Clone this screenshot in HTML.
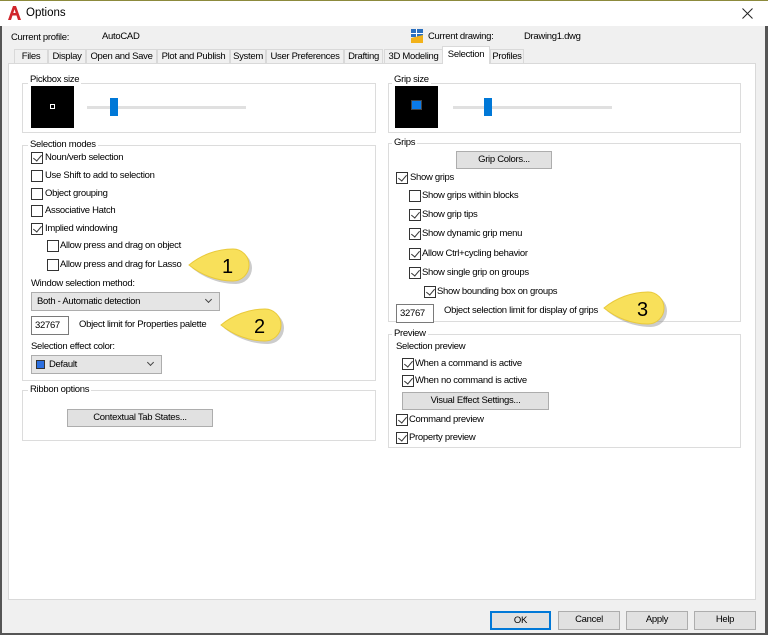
<!DOCTYPE html>
<html><head><meta charset="utf-8"><style>
*{box-sizing:border-box;margin:0;padding:0}
body{width:768px;height:635px;background:#f0f0f0;font-family:"Liberation Sans",sans-serif;font-size:9.5px;letter-spacing:-0.3px;color:#000;position:relative;overflow:hidden}
.a{position:absolute;white-space:nowrap}
.t{position:absolute;white-space:nowrap;line-height:12px}
.grp{position:absolute;border:1px solid #dcdcdc}
.gl{position:absolute;background:#fff;padding:0 2px;line-height:12px;white-space:nowrap}
.cb{position:absolute;width:12px;height:12px;border:1px solid #333;background:#fff}
.cb.c::after{content:"";position:absolute;left:3px;top:0px;width:4px;height:7px;border:solid #333;border-width:0 1.3px 1.3px 0;transform:rotate(40deg)}
.btn{position:absolute;background:#e1e1e1;border:1px solid #adadad;text-align:center;line-height:16px;white-space:nowrap}
.tab{position:absolute;top:49px;height:15px;border:1px solid #d9d9d9;border-bottom:none;background:#f0f0f0;line-height:14px;text-align:center;white-space:nowrap;overflow:hidden}
.inp{position:absolute;border:1px solid #7a7a7a;background:#fff;line-height:17px;padding-left:3px}
.dd{position:absolute;background:#e5e5e5;border:1px solid #adadad;line-height:17px;padding-left:5px;white-space:nowrap}
.dd::after{content:"";position:absolute;right:8px;top:4px;width:4px;height:4px;border:solid #444;border-width:0 1px 1px 0;transform:rotate(45deg)}
</style></head><body>
<div class="a" style="left:0;top:0;width:768px;height:26px;background:#fff;border-top:1px solid #8c8a3c"></div>
<div class="a" style="left:0;top:26px;width:2px;height:609px;background:#555"></div>
<div class="a" style="left:765px;top:26px;width:3px;height:609px;background:#555"></div>
<div class="a" style="left:0;top:633px;width:768px;height:2px;background:#555"></div>
<svg class="a" style="left:8px;top:6px" width="13" height="14" viewBox="0 0 13 14"><path d="M0 14 L5 0 H8 L13 14 H10 L8.5 9.5 H4.5 L3 14 Z M5.3 7 H7.7 L6.5 3.3 Z" fill="#d0262c"/></svg>
<div class="t" style="left:26px;top:7px;font-size:11.5px;letter-spacing:0">Options</div>
<svg class="a" style="left:742px;top:8px" width="11" height="11"><path d="M0.5 0.5 L10.5 10.5 M10.5 0.5 L0.5 10.5" stroke="#222" stroke-width="1"/></svg>

<div class="t" style="left:11px;top:32px">Current profile:</div>
<div class="t" style="left:102px;top:31px">AutoCAD</div>
<svg class="a" style="left:411px;top:29px" width="13" height="14"><rect x="0" y="0" width="12" height="8" fill="#2a6fbf"/><rect x="5" y="0" width="1" height="8" fill="#fff"/><rect x="0" y="4" width="12" height="1" fill="#fff"/><path d="M0 14 V9 L12 6 V14 Z" fill="#f2b21a"/></svg>
<div class="t" style="left:428px;top:31px">Current drawing:</div>
<div class="t" style="left:524px;top:31px">Drawing1.dwg</div>

<div class="tab" style="left:14px;width:34px">Files</div>
<div class="tab" style="left:48px;width:38px">Display</div>
<div class="tab" style="left:86px;width:71px">Open and Save</div>
<div class="tab" style="left:157px;width:73px">Plot and Publish</div>
<div class="tab" style="left:230px;width:36px">System</div>
<div class="tab" style="left:266px;width:78px">User Preferences</div>
<div class="tab" style="left:344px;width:39px">Drafting</div>
<div class="tab" style="left:384px;width:59px">3D Modeling</div>
<div class="tab" style="left:490px;width:34px">Profiles</div>
<div class="a" style="left:8px;top:63px;width:748px;height:537px;background:#fff;border:1px solid #d9d9d9"></div>
<div class="tab" style="left:442px;top:46px;width:48px;height:18px;background:#fff;line-height:16px">Selection</div>

<div class="grp" style="left:22px;top:83px;width:354px;height:50px"></div>
<div class="gl" style="left:28px;top:74px">Pickbox size</div>
<div class="a" style="left:31px;top:86px;width:43px;height:42px;background:#000"></div>
<div class="a" style="left:50px;top:104px;width:5px;height:5px;border:1px solid #fff"></div>
<div class="a" style="left:87px;top:106px;width:159px;height:3px;background:#e0e0e0"></div>
<div class="a" style="left:110px;top:98px;width:8px;height:18px;background:#0078d7"></div>

<div class="grp" style="left:388px;top:83px;width:353px;height:50px"></div>
<div class="gl" style="left:392px;top:74px">Grip size</div>
<div class="a" style="left:395px;top:86px;width:43px;height:42px;background:#000"></div>
<div class="a" style="left:411px;top:100px;width:11px;height:10px;background:#0a7ae8;border:1px solid #444"></div>
<div class="a" style="left:453px;top:106px;width:159px;height:3px;background:#e0e0e0"></div>
<div class="a" style="left:484px;top:98px;width:8px;height:18px;background:#0078d7"></div>

<div class="grp" style="left:22px;top:145px;width:354px;height:236px"></div>
<div class="gl" style="left:28px;top:139px">Selection modes</div>
<div class="cb c" style="left:31px;top:152px"></div><div class="t" style="left:45px;top:152px">Noun/verb selection</div>
<div class="cb" style="left:31px;top:170px"></div><div class="t" style="left:45px;top:170px">Use Shift to add to selection</div>
<div class="cb" style="left:31px;top:188px"></div><div class="t" style="left:45px;top:188px">Object grouping</div>
<div class="cb" style="left:31px;top:205px"></div><div class="t" style="left:45px;top:205px">Associative Hatch</div>
<div class="cb c" style="left:31px;top:223px"></div><div class="t" style="left:45px;top:223px">Implied windowing</div>
<div class="cb" style="left:47px;top:240px"></div><div class="t" style="left:60px;top:240px">Allow press and drag on object</div>
<div class="cb" style="left:47px;top:259px"></div><div class="t" style="left:60px;top:259px">Allow press and drag for Lasso</div>
<div class="t" style="left:31px;top:278px">Window selection method:</div>
<div class="dd" style="left:31px;top:292px;width:189px;height:19px">Both - Automatic detection</div>
<div class="inp" style="left:31px;top:316px;width:38px;height:19px">32767</div>
<div class="t" style="left:79px;top:319px">Object limit for Properties palette</div>
<div class="t" style="left:31px;top:341px">Selection effect color:</div>
<div class="dd" style="left:31px;top:355px;width:131px;height:19px;padding-left:17px">Default</div>
<div class="a" style="left:36px;top:360px;width:9px;height:9px;background:#2b6fe0;border:1px solid #333"></div>

<div class="grp" style="left:22px;top:390px;width:354px;height:51px"></div>
<div class="gl" style="left:28px;top:384px">Ribbon options</div>
<div class="btn" style="left:67px;top:409px;width:146px;height:18px">Contextual Tab States...</div>

<div class="grp" style="left:388px;top:143px;width:353px;height:179px"></div>
<div class="gl" style="left:392px;top:137px">Grips</div>
<div class="btn" style="left:456px;top:151px;width:96px;height:18px">Grip Colors...</div>
<div class="cb c" style="left:396px;top:172px"></div><div class="t" style="left:410px;top:172px">Show grips</div>
<div class="cb" style="left:409px;top:190px"></div><div class="t" style="left:422px;top:190px">Show grips within blocks</div>
<div class="cb c" style="left:409px;top:209px"></div><div class="t" style="left:422px;top:209px">Show grip tips</div>
<div class="cb c" style="left:409px;top:228px"></div><div class="t" style="left:422px;top:228px">Show dynamic grip menu</div>
<div class="cb c" style="left:409px;top:248px"></div><div class="t" style="left:422px;top:248px">Allow Ctrl+cycling behavior</div>
<div class="cb c" style="left:409px;top:267px"></div><div class="t" style="left:422px;top:267px">Show single grip on groups</div>
<div class="cb c" style="left:424px;top:286px"></div><div class="t" style="left:437px;top:286px">Show bounding box on groups</div>
<div class="inp" style="left:396px;top:304px;width:38px;height:19px">32767</div>
<div class="t" style="left:444px;top:305px">Object selection limit for display of grips</div>

<div class="grp" style="left:388px;top:334px;width:353px;height:114px"></div>
<div class="gl" style="left:392px;top:328px">Preview</div>
<div class="t" style="left:396px;top:341px">Selection preview</div>
<div class="cb c" style="left:402px;top:358px"></div><div class="t" style="left:415px;top:358px">When a command is active</div>
<div class="cb c" style="left:402px;top:375px"></div><div class="t" style="left:415px;top:375px">When no command is active</div>
<div class="btn" style="left:402px;top:392px;width:147px;height:18px">Visual Effect Settings...</div>
<div class="cb c" style="left:396px;top:414px"></div><div class="t" style="left:409px;top:414px">Command preview</div>
<div class="cb c" style="left:396px;top:432px"></div><div class="t" style="left:409px;top:432px">Property preview</div>

<svg class="a" style="left:0;top:0" width="768" height="635">
<defs><g id="co"><path d="M0 16 C12 6 28 0 44 0 A16 16 0 0 1 44 32 C28 32 12 26 0 16 Z"/></g></defs>
<g fill="#9a9a9a" opacity=".5"><use href="#co" x="192" y="252"/><use href="#co" x="224" y="312"/><use href="#co" x="607" y="295"/></g>
<g fill="#f8e05a" stroke="#e9c93a" stroke-width="1"><use href="#co" x="189" y="249"/><use href="#co" x="221" y="309"/><use href="#co" x="604" y="292"/></g>
<g font-family="Liberation Sans, sans-serif" font-size="20" fill="#000"><text x="222" y="273">1</text><text x="254" y="333">2</text><text x="637" y="316">3</text></g>
</svg>

<div class="btn" style="left:490px;top:611px;width:61px;height:19px;border:2px solid #0078d7;line-height:15px">OK</div>
<div class="btn" style="left:558px;top:611px;width:62px;height:19px">Cancel</div>
<div class="btn" style="left:626px;top:611px;width:62px;height:19px">Apply</div>
<div class="btn" style="left:694px;top:611px;width:62px;height:19px">Help</div>
</body></html>
